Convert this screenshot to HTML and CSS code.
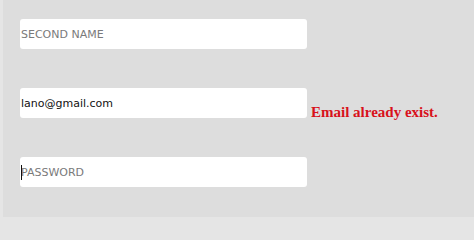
FILE: index.html
```html
<!DOCTYPE html>
<html>
<head>
<meta charset="utf-8">
<link rel="stylesheet" href="styles.css">
</head>
<body>
<div class="panel">
  <div class="row">
    <input class="field" type="text" placeholder="SECOND NAME">
  </div>
  <div class="row">
    <input class="field" type="text" value="lano@gmail.com">
    <span class="error">Email already exist.</span>
  </div>
  <div class="row">
    <div class="field-wrap">
      <input class="field" type="password" placeholder="PASSWORD">
      <span class="caret"></span>
    </div>
  </div>
</div>
</body>
</html>
```
FILE: styles.css
```css
html, body {
  margin: 0;
  padding: 0;
}
body {
  background: #e5e5e5;
  width: 474px;
  height: 219px;
  overflow: hidden;
}
.panel {
  margin-left: 3px;
  height: 217px;
  background: #dddddd;
  padding: 19px 0 0 17px;
  box-sizing: border-box;
  display: flex;
  flex-direction: column;
  gap: 39px;
}
.row {
  display: flex;
  align-items: flex-end;
}
.field-wrap {
  position: relative;
}
.field {
  display: block;
  width: 287px;
  height: 30px;
  box-sizing: border-box;
  border: none;
  border-radius: 3px;
  background: #ffffff;
  padding: 0 0 0 1px;
  margin: 0;
  font-family: "DejaVu Sans", Verdana, sans-serif;
  font-size: 11px;
  color: #111111;
  outline: none;
}
.field::placeholder {
  color: #7a7a7a;
  opacity: 1;
}
.caret {
  position: absolute;
  left: 1px;
  top: 8px;
  width: 1px;
  height: 15px;
  background: #111111;
}
.error {
  font-family: "Liberation Serif", "Times New Roman", serif;
  font-weight: bold;
  font-size: 15px;
  color: #d8111b;
  margin-left: 4px;
  margin-bottom: -3px;
  line-height: 17px;
}
```
